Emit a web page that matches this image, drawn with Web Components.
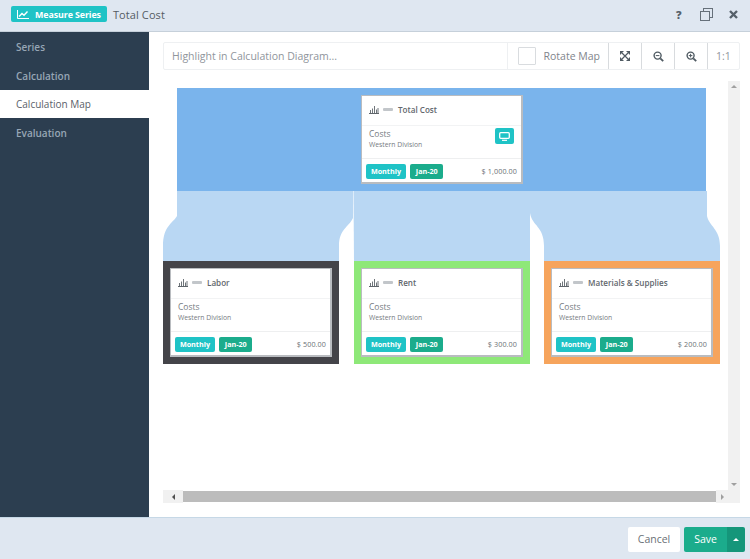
<!DOCTYPE html>
<html>
<head>
<meta charset="utf-8">
<title>Measure Series</title>
<style>
  html, body { margin: 0; height: 100%; }
  body { width: 750px; height: 559px; overflow: hidden; font-family: 'Open Sans', sans-serif; }
</style>
</head>
<body>
<series-dialog>
  <dialog-header slot="header" title="Total Cost"></dialog-header>
  <side-nav slot="nav"></side-nav>
  <map-toolbar slot="toolbar"></map-toolbar>
  <calc-map slot="map">
    <map-node style="left:191px;top:0" name="Total Cost" amount="$ 1,000.00" accent="#7ab4ec" screen></map-node>
    <map-node style="left:0;top:173px" name="Labor" amount="$ 500.00" accent="#444449"></map-node>
    <map-node style="left:191px;top:173px" name="Rent" amount="$ 300.00" accent="#8ee878"></map-node>
    <map-node style="left:381px;top:173px" name="Materials &amp; Supplies" amount="$ 200.00" accent="#f6a45c"></map-node>
  </calc-map>
  <dialog-footer slot="footer"></dialog-footer>
</series-dialog>

<script>
class SeriesDialog extends HTMLElement {
  constructor() {
    super();
    this.attachShadow({ mode: 'open' });
    this.shadowRoot.innerHTML = `
      <style>
        :host { display: grid; grid-template: 32px 1fr 42px / 149px 1fr; width: 750px; height: 559px; background: #fff; }
        .head { grid-column: 1 / 3; }
        .foot { grid-column: 1 / 3; }
        .main { display: flex; flex-direction: column; padding: 10px 10px 14px 14px; gap: 11px; min-height: 0; }
      </style>
      <div class="head"><slot name="header"></slot></div>
      <slot name="nav"></slot>
      <div class="main"><slot name="toolbar"></slot><slot name="map"></slot></div>
      <div class="foot"><slot name="footer"></slot></div>
    `;
  }
}

class DialogHeader extends HTMLElement {
  constructor() {
    super();
    this.attachShadow({ mode: 'open' });
    this.shadowRoot.innerHTML = `
      <style>
        :host { display: flex; align-items: center; height: 32px; box-sizing: border-box; padding: 0 12px 3px 11px; background: #dfe7f1; border-bottom: 1px solid #c6d0da; }
        .tag { display: flex; align-items: center; gap: 6px; height: 16px; padding: 0 6px; background: #1fc3c6; color: #fff; border-radius: 2px; font-size: 8.9px; font-weight: 700; letter-spacing: -.1px; }
        .name { margin-left: 6px; font-size: 11px; color: #555c64; letter-spacing: .1px; }
        .tools { margin-left: auto; display: flex; align-items: center; gap: 16px; }
        .q { font-size: 11px; font-weight: 800; color: #55606a; width: 8px; }
        svg { display: block; }
      </style>
      <span class="tag">
        <svg width="12" height="9" viewBox="0 0 12 9" fill="none" stroke="#fff"><path d="M.5 0v8.5H12" stroke-width="1"/><path d="M2 6.5 5 3.5l2 1.7L10.5 1.5" stroke-width="1.4"/></svg>
        Measure Series
      </span>
      <span class="name"></span>
      <span class="tools">
        <span class="q">?</span>
        <svg width="13" height="13" viewBox="0 0 13 13" fill="#dfe7f1" stroke="#66707a"><rect x="3.5" y=".5" width="9" height="9"/><rect x=".5" y="3.5" width="9" height="9"/></svg>
        <svg width="9" height="9" viewBox="0 0 9 9" stroke="#55606a" stroke-width="2.4"><path d="M1 1l7 7M8 1 1 8"/></svg>
      </span>
    `;
  }
  connectedCallback() {
    this.shadowRoot.querySelector('.name').textContent = this.getAttribute('title');
  }
}

class SideNav extends HTMLElement {
  constructor() {
    super();
    this.attachShadow({ mode: 'open' });
    this.shadowRoot.innerHTML = `
      <style>
        :host { display: block; background: #2c3e50; }
        div { height: 29px; box-sizing: border-box; padding-left: 16px; display: flex; align-items: center; font-size: 10px; font-weight: 600; color: #97a6b5; }
        .on { background: #fff; color: #5a6169; font-weight: 400; height: 28px; }
      </style>
      <div>Series</div>
      <div>Calculation</div>
      <div class="on">Calculation Map</div>
      <div>Evaluation</div>
    `;
  }
}

class MapToolbar extends HTMLElement {
  constructor() {
    super();
    this.attachShadow({ mode: 'open' });
    this.shadowRoot.innerHTML = `
      <style>
        :host { display: flex; flex: none; height: 28px; box-sizing: border-box; border: 1px solid #eef0f2; border-radius: 2px; color: #8a9098; font-size: 10.5px; }
        .search { flex: 1; display: flex; align-items: center; padding-left: 8px; color: #8f959c; }
        .rotate { display: flex; align-items: center; gap: 8px; padding: 0 8px 0 10px; border-left: 1px solid #eef0f2; color: #7f858c; }
        .box { width: 16px; height: 16px; border: 1px solid #d9dcdf; border-radius: 1px; }
        .btn { width: 32px; display: flex; align-items: center; justify-content: center; border-left: 1px solid #d8dbde; }
        .btn.one { width: 31px; color: #8f959c; font-size: 10.5px; }
        svg { display: block; }
      </style>
      <span class="search">Highlight in Calculation Diagram...</span>
      <span class="rotate"><span class="box"></span>Rotate Map</span>
      <span class="btn">
        <svg width="10" height="10" viewBox="0 0 10 10" fill="#4f5a62" stroke="#4f5a62"><path d="M0 0h4L0 4zM10 0H6l4 4zM0 10h4L0 6zM10 10H6l4-4z" stroke="none"/><path d="M2 2l6 6M8 2 2 8" stroke-width="1.2"/></svg>
      </span>
      <span class="btn">
        <svg width="11" height="11" viewBox="0 0 11 11" fill="none" stroke="#4f5a62"><circle cx="4.6" cy="4.6" r="3.5" stroke-width="1.4"/><path d="M7.3 7.3 10.2 10.2" stroke-width="1.8"/><path d="M2.8 4.6h3.6" stroke-width="1"/></svg>
      </span>
      <span class="btn">
        <svg width="11" height="11" viewBox="0 0 11 11" fill="none" stroke="#4f5a62"><circle cx="4.6" cy="4.6" r="3.5" stroke-width="1.4"/><path d="M7.3 7.3 10.2 10.2" stroke-width="1.8"/><path d="M2.8 4.6h3.6M4.6 2.8v3.6" stroke-width="1"/></svg>
      </span>
      <span class="btn one">1:1</span>
    `;
  }
}

class CalcMap extends HTMLElement {
  constructor() {
    super();
    this.attachShadow({ mode: 'open' });
    this.shadowRoot.innerHTML = `
      <style>
        :host { display: grid; grid-template: 1fr 13px / 1fr 12px; flex: 1; min-height: 0; }
        .view { position: relative; overflow: hidden; }
        .links { position: absolute; left: 0; top: 0; }
        .canvas { position: absolute; left: 0; top: 7px; width: 557px; height: 276px; }
        .vbar { background: #f1f1f1; display: flex; flex-direction: column; justify-content: space-between; align-items: center; padding: 4px 0; box-sizing: border-box; }
        .hbar { display: flex; align-items: center; height: 13px; }
        .end { width: 20px; height: 13px; background: #f1f1f1; display: flex; align-items: center; justify-content: center; flex: none; }
        .end.r { width: 12px; }
        .thumb { flex: 1; height: 11px; background: #bcbcbc; }
        .corner { background: #f1f1f1; }
        i { display: block; width: 0; height: 0; border: 3px solid transparent; }
        .up { border-bottom-color: #a0a0a0; border-top: 0; }
        .dn { border-top-color: #a0a0a0; border-bottom: 0; }
        .lf { border-right-color: #505050; border-left: 0; }
        .rt { border-left-color: #a0a0a0; border-right: 0; }
      </style>
      <div class="view">
        <svg class="links" width="565" height="290" viewBox="0 0 565 290">
          <rect x="14" y="7" width="529" height="103" fill="#7ab4ec"/>
          <path d="M14 110V135C10 142 0 145 0 165V181H176V165C176 148 186 146 190 137V110Z" fill="#b9d7f3"/>
          <path d="M190.500 110H367V181H191Z" fill="#b9d7f3"/>
          <path d="M367 110V132C369 145 381 145 381 165V181H557V165C557 148 546 145 544 135V110Z" fill="#b9d7f3"/>
        </svg>
        <div class="canvas"><slot></slot></div>
      </div>
      <div class="vbar"><i class="up"></i><i class="dn"></i></div>
      <div class="hbar"><span class="end"><i class="lf"></i></span><span class="thumb"></span><span class="end r"><i class="rt"></i></span></div>
      <div class="corner"></div>
    `;
  }
}

class MapNode extends HTMLElement {
  constructor() {
    super();
    this.attachShadow({ mode: 'open' });
    this.shadowRoot.innerHTML = `
      <style>
        :host { display: block; position: absolute; width: 176px; height: 103px; box-sizing: border-box; border: 7px solid var(--accent); }
        .card { height: 100%; box-sizing: border-box; background: #fff; border: solid #b9bcc0; border-width: 1px 2px 2px 1px; display: flex; flex-direction: column; color: #60666c; }
        .title { height: 27px; flex: none; padding: 0 0 2px 7px; display: flex; align-items: center; gap: 4px; border-bottom: 1px solid #f2f3f4; font-size: 8.1px; font-weight: 600; color: #62676d; }
        .title .dash { width: 10px; height: 3px; margin-right: 1px; background: #c2c6ca; border-radius: 1px; }
        .body { flex: 1; position: relative; box-sizing: border-box; padding: 2px 7px 0; border-bottom: 1px solid #eeeff0; }
        .kind { font-size: 8.5px; line-height: 12px; color: #777c82; }
        .area { font-size: 6.8px; line-height: 9px; color: #777c82; }
        .screen { position: absolute; right: 7px; top: 2px; width: 19px; height: 16px; border-radius: 2px; background: #1fc3c6; display: flex; align-items: center; justify-content: center; }
        .foot { height: 23px; flex: none; box-sizing: border-box; display: flex; align-items: center; gap: 4px; padding: 1px 4px 0 3.500px; font-size: 7.2px; }
        .pill { height: 15px; display: flex; align-items: center; padding: 0 5.400px; border-radius: 2px; color: #fff; font-weight: 700; background: #1fc3c6; }
        .pill.date { background: #1bac8c; }
        .amount { margin-left: auto; color: #6c7176; font-size: 7.2px; letter-spacing: .1px; }
        svg { display: block; }
      </style>
      <div class="card">
        <div class="title">
          <svg width="10" height="8" viewBox="0 0 10 8" fill="none" stroke="#5f656b"><path d="M0 7.5h10"/><path d="M1.5 7V4M3.5 7V2.5M5.5 7V0M7.5 7V3.5M9 7V2" stroke-width=".9"/></svg>
          <span class="dash"></span>
          <span class="name"></span>
        </div>
        <div class="body">
          <div class="kind">Costs</div>
          <div class="area">Western Division</div>
        </div>
        <div class="foot">
          <span class="pill">Monthly</span>
          <span class="pill date">Jan-20</span>
          <span class="amount"></span>
        </div>
      </div>
    `;
  }
  connectedCallback() {
    this.style.setProperty('--accent', this.getAttribute('accent'));
    this.shadowRoot.querySelector('.name').textContent = this.getAttribute('name');
    this.shadowRoot.querySelector('.amount').textContent = this.getAttribute('amount');
    if (this.hasAttribute('screen')) {
      const icon = document.createElement('span');
      icon.className = 'screen';
      icon.innerHTML = '<svg width="11" height="9" viewBox="0 0 11 9" fill="none" stroke="#fff"><rect x=".7" y=".7" width="9.6" height="5.6" rx="1" stroke-width="1.3"/><path d="M3 8.3h5" stroke-width="1.2"/></svg>';
      this.shadowRoot.querySelector('.body').appendChild(icon);
    }
  }
}

class DialogFooter extends HTMLElement {
  constructor() {
    super();
    this.attachShadow({ mode: 'open' });
    this.shadowRoot.innerHTML = `
      <style>
        :host { display: flex; justify-content: flex-end; align-items: center; gap: 4px; height: 42px; box-sizing: border-box; padding: 1px 5px 0 0; background: #dfe7f1; border-top: 1px solid #c6d8e6; font-size: 10.5px; }
        .cancel { width: 52px; height: 25px; display: flex; align-items: center; justify-content: center; background: #fff; color: #6a7076; border-radius: 2px; }
        .save { display: flex; height: 25px; border-radius: 2px; overflow: hidden; color: #fff; }
        .save span { display: flex; align-items: center; justify-content: center; }
        .label { width: 43px; background: #1bac8c; }
        .more { width: 18px; background: #15967a; }
        .more i { width: 0; height: 0; border: 3px solid transparent; border-bottom-color: #fff; border-top: 0; }
      </style>
      <span class="cancel">Cancel</span>
      <span class="save"><span class="label">Save</span><span class="more"><i></i></span></span>
    `;
  }
}

customElements.define('series-dialog', SeriesDialog);
customElements.define('dialog-header', DialogHeader);
customElements.define('side-nav', SideNav);
customElements.define('map-toolbar', MapToolbar);
customElements.define('calc-map', CalcMap);
customElements.define('map-node', MapNode);
customElements.define('dialog-footer', DialogFooter);
</script>
</body>
</html>
